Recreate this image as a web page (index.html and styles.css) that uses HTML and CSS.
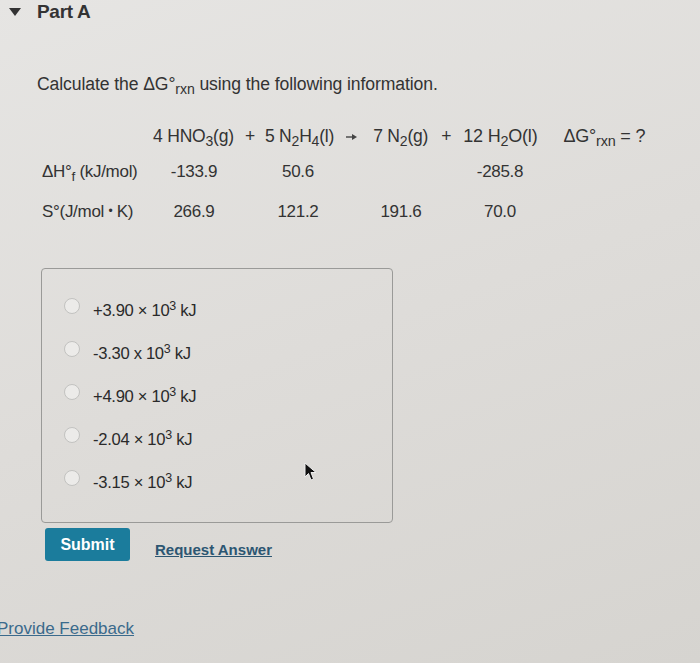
FILE: index.html
```html
<!DOCTYPE html>
<html>
<head>
<meta charset="utf-8">
<link rel="stylesheet" href="styles.css">
</head>
<body>
<div class="page">
  <div class="part-head">
    <span class="tri"></span>
    <span class="part-title">Part A</span>
  </div>
  <p class="question">Calculate the ΔG°<sub>rxn</sub> using the following information.</p>
  <div class="equation">
    <span class="t1">4 HNO<sub>3</sub>(g)</span>
    <span class="t2">+</span>
    <span class="t3">5 N<sub>2</sub>H<sub>4</sub>(l)</span>
    <svg class="t4 arrow" width="11" height="8" viewBox="0 0 11 8"><path d="M0 4 H7" stroke="#444" stroke-width="1.4"/><path d="M6 1 L11 4 L6 7 Z" fill="#444"/></svg>
    <span class="t5">7 N<sub>2</sub>(g)</span>
    <span class="t6">+</span>
    <span class="t7">12 H<sub>2</sub>O(l)</span>
    <span class="t8">ΔG°<sub>rxn</sub> = ?</span>
  </div>
  <div class="data">
    <div class="lbl">ΔH°<sub>f</sub> (kJ/mol)</div>
    <div class="val">-133.9</div>
    <div class="val">50.6</div>
    <div class="val"></div>
    <div class="val">-285.8</div>
    <div class="lbl">S°(J/mol <span class="bul">•</span> K)</div>
    <div class="val">266.9</div>
    <div class="val">121.2</div>
    <div class="val">191.6</div>
    <div class="val">70.0</div>
  </div>
  <div class="choices">
    <div class="opt"><span class="radio"></span><span class="otext">+3.90 × 10<sup>3</sup> kJ</span></div>
    <div class="opt"><span class="radio"></span><span class="otext">-3.30 x 10<sup>3</sup> kJ</span></div>
    <div class="opt"><span class="radio"></span><span class="otext">+4.90 × 10<sup>3</sup> kJ</span></div>
    <div class="opt"><span class="radio"></span><span class="otext">-2.04 × 10<sup>3</sup> kJ</span></div>
    <div class="opt"><span class="radio"></span><span class="otext">-3.15 × 10<sup>3</sup> kJ</span></div>
    <svg class="cursor" width="14" height="20" viewBox="0 0 14 20"><path d="M1 1 L1 15 L4.5 11.5 L7 18 L9.5 17 L7 10.5 L12 10.5 Z" fill="#111" stroke="#eee" stroke-width="1"/></svg>
  </div>
  <div class="actions">
    <button class="submit">Submit</button>
    <a class="request">Request Answer</a>
  </div>
  <a class="feedback">Provide Feedback</a>
</div>
</body>
</html>
```
FILE: styles.css
```css
html, body {
  margin: 0;
  padding: 0;
}
body {
  background: linear-gradient(160deg, #e6e5e3 0%, #dedcd9 50%, #d6d4d0 100%);
  font-family: "Liberation Sans", Arial, sans-serif;
  color: #2e2e2e;
  width: 700px;
  height: 663px;
  overflow: hidden;
}
.page {
  position: relative;
  padding-top: 2px;
}
.part-head {
  display: flex;
  align-items: center;
  height: 20px;
}
.tri {
  width: 0;
  height: 0;
  border-left: 6px solid transparent;
  border-right: 6px solid transparent;
  border-top: 8px solid #333;
  margin-left: 9px;
  margin-right: 16px;
}
.part-title {
  font-size: 19px;
  font-weight: bold;
  color: #333;
  letter-spacing: -0.3px;
}
.question {
  margin: 52px 0 0 37px;
  font-size: 17.6px;
  line-height: 20px;
  color: #333;
  letter-spacing: -0.1px;
}
sub {
  font-size: 0.8em;
  vertical-align: -0.3em;
  line-height: 0;
}
sup {
  font-size: 0.75em;
  vertical-align: 0.45em;
  line-height: 0;
}
.equation {
  display: flex;
  align-items: baseline;
  margin: 32px 0 0 153px;
  font-size: 17.5px;
  line-height: 20px;
  white-space: nowrap;
  color: #333;
  letter-spacing: -0.2px;
}
.t2 { margin-left: 11px; }
.t3 { margin-left: 10px; }
.t4 { margin-left: 12px; align-self: center; margin-top: 2px; }
.t5 { margin-left: 16px; }
.t6 { margin-left: 13px; }
.t7 { margin-left: 12px; font-size: 18px; }
.t8 { margin-left: 26px; font-size: 18px; }
.data {
  display: grid;
  grid-template-columns: 100px 104px 104px 102px 96px;
  grid-auto-rows: 40px;
  align-items: center;
  margin: 6px 0 0 42px;
  font-size: 17px;
  color: #333;
  letter-spacing: -0.3px;
}
.bul {
  font-size: 12px;
  vertical-align: 2px;
}
.lbl {
  white-space: nowrap;
}
.val {
  text-align: center;
}
.choices {
  position: relative;
  margin: 36px 0 0 41px;
  width: 352px;
  height: 255px;
  border: 1px solid #9a9a98;
  border-radius: 4px;
  box-sizing: border-box;
  padding-top: 31px;
  display: flex;
  flex-direction: column;
  gap: 22px;
}
.opt {
  display: flex;
  align-items: center;
  height: 21px;
}
.radio {
  width: 14px;
  height: 14px;
  border: 1px solid #c2c2c0;
  border-radius: 50%;
  background: #ecebe9;
  margin-left: 22px;
  margin-right: 13px;
  margin-top: -10px;
}
.otext {
  font-size: 16.6px;
  color: #2a2a2a;
  letter-spacing: -0.3px;
}
.cursor {
  position: absolute;
  left: 262px;
  top: 193px;
}
.actions {
  display: flex;
  align-items: center;
  margin: 5px 0 0 45px;
}
.submit {
  width: 85px;
  height: 33px;
  background: #1b7c9c;
  color: #fff;
  border: none;
  border-radius: 3px;
  font-family: "Liberation Sans", Arial, sans-serif;
  font-weight: bold;
  font-size: 16px;
  padding: 0;
}
.request {
  margin-left: 25px;
  margin-top: 10px;
  font-weight: bold;
  font-size: 15px;
  color: #2c5672;
  text-decoration: underline;
}
.feedback {
  display: block;
  margin: 58px 0 0 -3px;
  font-size: 17px;
  color: #3a6a8c;
  text-decoration: underline;
}
```
